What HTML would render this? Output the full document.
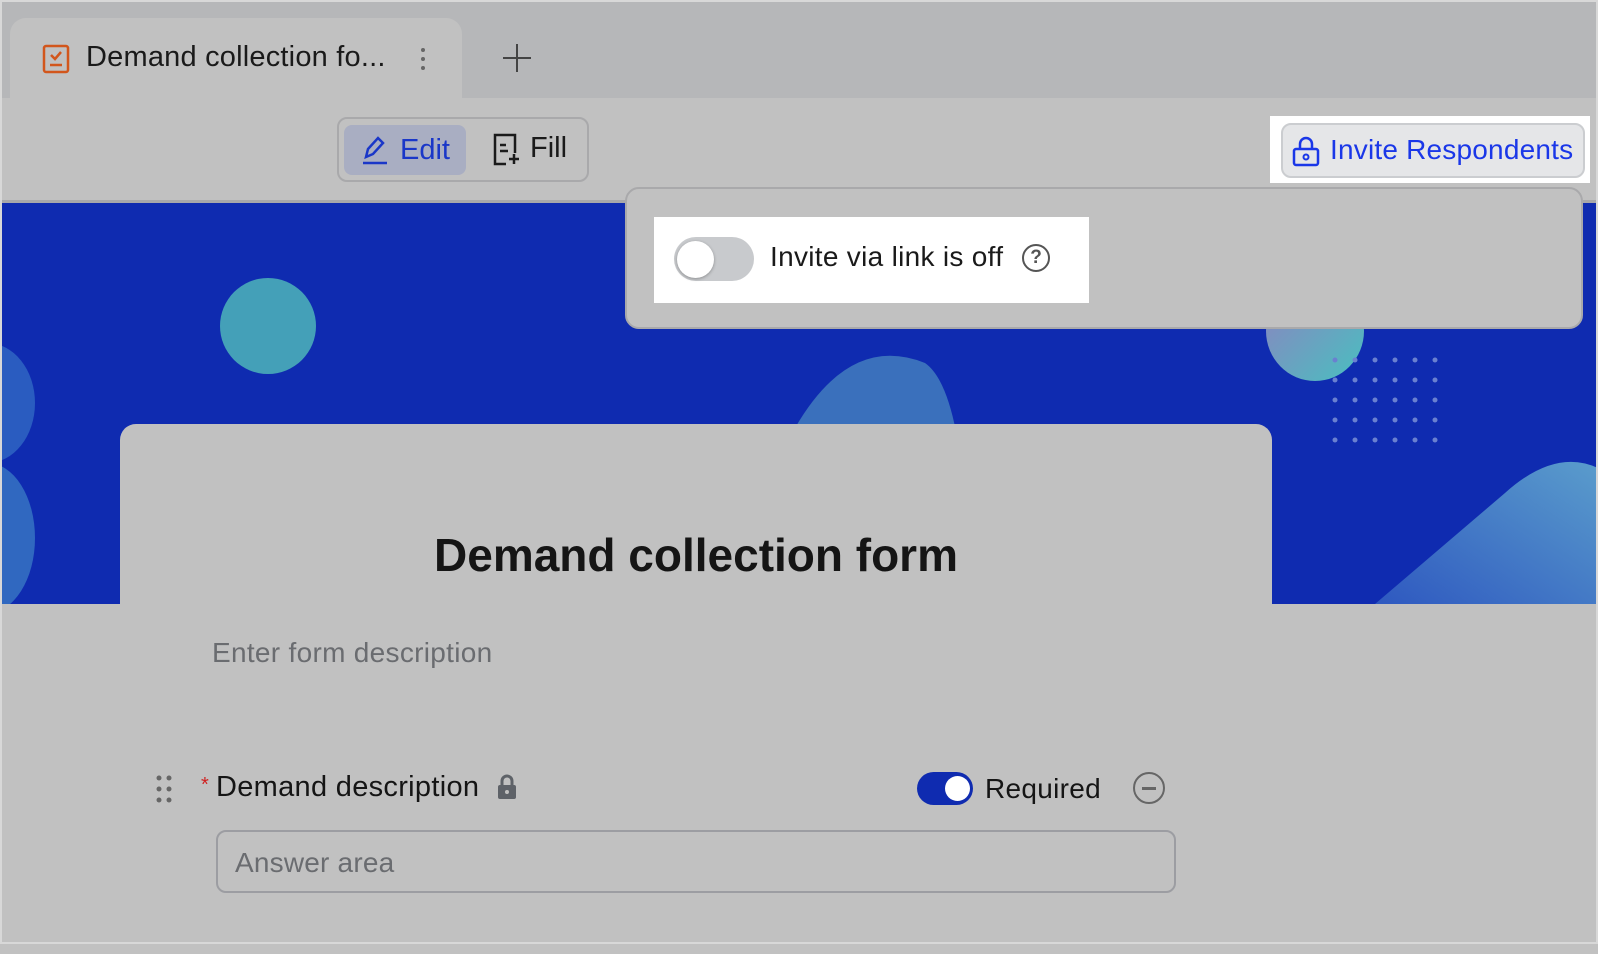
<!DOCTYPE html>
<html><head><meta charset="utf-8"><style>
*{margin:0;padding:0;box-sizing:border-box}
body{width:1598px;height:944px;overflow:hidden;background:#c1c1c1;font-family:"Liberation Sans",sans-serif;position:relative}
.a{position:absolute}
</style></head><body>
<div class="a" style="left:0;top:0;width:1598px;height:98px;background:#b6b7b9"></div>
<div class="a" style="left:10px;top:18px;width:452px;height:82px;background:#c1c1c1;border-radius:16px 16px 0 0"></div>
<svg class="a" style="left:42px;top:44px" width="28" height="30" viewBox="0 0 28 30"><rect x="2" y="2" width="24" height="26" rx="2" fill="none" stroke="#d2561c" stroke-width="2.5"/><path d="M9 11l4 4 6-7" fill="none" stroke="#d2561c" stroke-width="2.5"/><path d="M8 21h12" stroke="#d2561c" stroke-width="2.5"/></svg>
<div class="a" style="left:86px;top:41px;font-size:29px;color:#1a1a1a;letter-spacing:0.2px">Demand collection fo...</div>
<div class="a" style="left:421px;top:48px;width:4px;height:4px;border-radius:2px;background:#666;box-shadow:0 9px 0 #666,0 18px 0 #666"></div>
<div class="a" style="left:503px;top:57px;width:28px;height:2px;background:#444"></div>
<div class="a" style="left:516px;top:44px;width:2px;height:28px;background:#444"></div>
<div class="a" style="left:0;top:98px;width:1598px;height:104px;background:#c1c1c1"></div>
<div class="a" style="left:0;top:200px;width:1598px;height:3px;background:#a8a8aa"></div>
<div class="a" style="left:337px;top:117px;width:252px;height:65px;border:2px solid #a9a9ab;border-radius:10px"></div>
<div class="a" style="left:344px;top:125px;width:122px;height:50px;background:#a9aec2;border-radius:8px"></div>
<svg class="a" style="left:360px;top:134px" width="30" height="32" viewBox="0 0 30 32"><path d="M6 23l2-8L18 4l5 5-10 11z" fill="none" stroke="#1a37c8" stroke-width="2.5"/><path d="M3 29h24" stroke="#1a37c8" stroke-width="2.5"/></svg>
<div class="a" style="left:400px;top:134px;font-size:29px;color:#1a37c8">Edit</div>
<svg class="a" style="left:492px;top:133px" width="28" height="34" viewBox="0 0 28 34"><path d="M14 31H3V2h20v18" fill="none" stroke="#1a1a1a" stroke-width="2.5"/><path d="M8 12h6M8 18h8M17 26h10M22 21v10" stroke="#1a1a1a" stroke-width="2.5"/></svg>
<div class="a" style="left:530px;top:132px;font-size:29px;color:#1a1a1a">Fill</div>
<div class="a" style="left:1270px;top:116px;width:320px;height:67px;background:#fff"></div>
<div class="a" style="left:1281px;top:123px;width:304px;height:55px;background:#e5e6e8;border:2px solid #cbcdd0;border-radius:10px"></div>
<svg class="a" style="left:1292px;top:135px" width="28" height="32" viewBox="0 0 28 32"><path d="M8 14V9a6 6 0 0112 0v5" fill="none" stroke="#1a37e8" stroke-width="2.5"/><rect x="2" y="14" width="24" height="16" rx="2" fill="none" stroke="#1a37e8" stroke-width="2.5"/><circle cx="14" cy="22" r="2.5" fill="none" stroke="#1a37e8" stroke-width="2"/></svg>
<div class="a" style="left:1330px;top:134px;font-size:28px;color:#1a37e8;letter-spacing:0.2px">Invite Respondents</div>
<div class="a" style="left:0;top:203px;width:1598px;height:401px;background:#0f2bb0;overflow:hidden">
 <div class="a" style="left:220px;top:75px;width:96px;height:96px;border-radius:50%;background:#44a0b8"></div>
 <div class="a" style="left:-60px;top:140px;width:95px;height:120px;border-radius:50%;background:#2a5cc0"></div>
 <div class="a" style="left:-60px;top:260px;width:95px;height:150px;border-radius:50%;background:#3068c0"></div>
 <svg class="a" style="left:0;top:0" width="1598" height="401">
  <defs><linearGradient id="g" x1="0" y1="1" x2="1" y2="0"><stop offset="0" stop-color="#2e58c0"/><stop offset="1" stop-color="#5a9ccc"/></linearGradient>
  <linearGradient id="h" x1="0" y1="0" x2="1" y2="1"><stop offset="0" stop-color="#9080c0"/><stop offset="1" stop-color="#48c0c0"/></linearGradient></defs>
  <path d="M700 401 L795 225 Q850 130 925 160 Q968 190 968 401 Z" fill="#3a70bc"/>
  <path d="M1375 401 L1505 290 Q1555 245 1598 265 L1598 401 Z" fill="url(#g)"/>
  <ellipse cx="1315" cy="128" rx="49" ry="50" fill="url(#h)"/>
 </svg>
 <svg class="a" style="left:1330px;top:152px" width="110" height="90"><pattern id="p" width="20" height="20" patternUnits="userSpaceOnUse"><circle cx="5" cy="5" r="2.5" fill="#6a80d0"/></pattern><rect width="120" height="100" fill="url(#p)"/></svg>
</div>
<div class="a" style="left:625px;top:187px;width:958px;height:142px;background:#c1c1c1;border:2px solid #a9a9ab;border-radius:14px"></div>
<div class="a" style="left:654px;top:217px;width:435px;height:86px;background:#fff"></div>
<div class="a" style="left:674px;top:237px;width:80px;height:44px;border-radius:22px;background:#c8cacd"></div>
<div class="a" style="left:677px;top:241px;width:37px;height:37px;border-radius:50%;background:#fff;box-shadow:0 1px 3px rgba(0,0,0,.3)"></div>
<div class="a" style="left:770px;top:241px;font-size:28px;color:#1a1a1a;letter-spacing:0.3px">Invite via link is off</div>
<div class="a" style="left:1022px;top:244px;width:28px;height:28px;border:2.5px solid #555;border-radius:50%;font-size:19px;line-height:23px;text-align:center;color:#555;font-weight:bold">?</div>
<div class="a" style="left:120px;top:424px;width:1152px;height:530px;background:#c1c1c1;border-radius:16px 16px 0 0"></div>
<div class="a" style="left:120px;top:528px;width:1152px;text-align:center;font-size:46px;font-weight:bold;color:#151515">Demand collection form</div>
<div class="a" style="left:212px;top:637px;font-size:28px;color:#6a6c70;letter-spacing:0.3px">Enter form description</div>
<svg class="a" style="left:155px;top:774px" width="20" height="32"><g fill="#666"><circle cx="4" cy="4" r="2.5"/><circle cx="14" cy="4" r="2.5"/><circle cx="4" cy="15" r="2.5"/><circle cx="14" cy="15" r="2.5"/><circle cx="4" cy="26" r="2.5"/><circle cx="14" cy="26" r="2.5"/></g></svg>
<div class="a" style="left:201px;top:774px;font-size:20px;color:#d02020">*</div>
<div class="a" style="left:216px;top:771px;font-size:29px;color:#151515;letter-spacing:0.3px">Demand description</div>
<svg class="a" style="left:496px;top:774px" width="22" height="26"><path d="M6 11V7a5 5 0 0110 0v4" fill="none" stroke="#5e6268" stroke-width="3"/><rect x="2" y="11" width="18" height="14" rx="2" fill="#5e6268"/><circle cx="11" cy="18" r="2" fill="#c1c1c1"/></svg>
<div class="a" style="left:917px;top:772px;width:56px;height:33px;border-radius:17px;background:#0f2bb0"></div>
<div class="a" style="left:945px;top:776px;width:25px;height:25px;border-radius:50%;background:#fff"></div>
<div class="a" style="left:985px;top:773px;font-size:28px;color:#151515;letter-spacing:0.3px">Required</div>
<div class="a" style="left:1133px;top:772px;width:32px;height:32px;border:2.5px solid #666;border-radius:50%"></div>
<div class="a" style="left:1142px;top:787px;width:14px;height:2.5px;background:#666"></div>
<div class="a" style="left:216px;top:830px;width:960px;height:63px;border:2px solid #9c9da2;border-radius:10px"></div>
<div class="a" style="left:235px;top:847px;font-size:28px;color:#6a6c70;letter-spacing:0.2px">Answer area</div>
<div class="a" style="left:0;top:0;width:1598px;height:944px;border:2px solid #d8d8d8;pointer-events:none"></div>
</body></html>
